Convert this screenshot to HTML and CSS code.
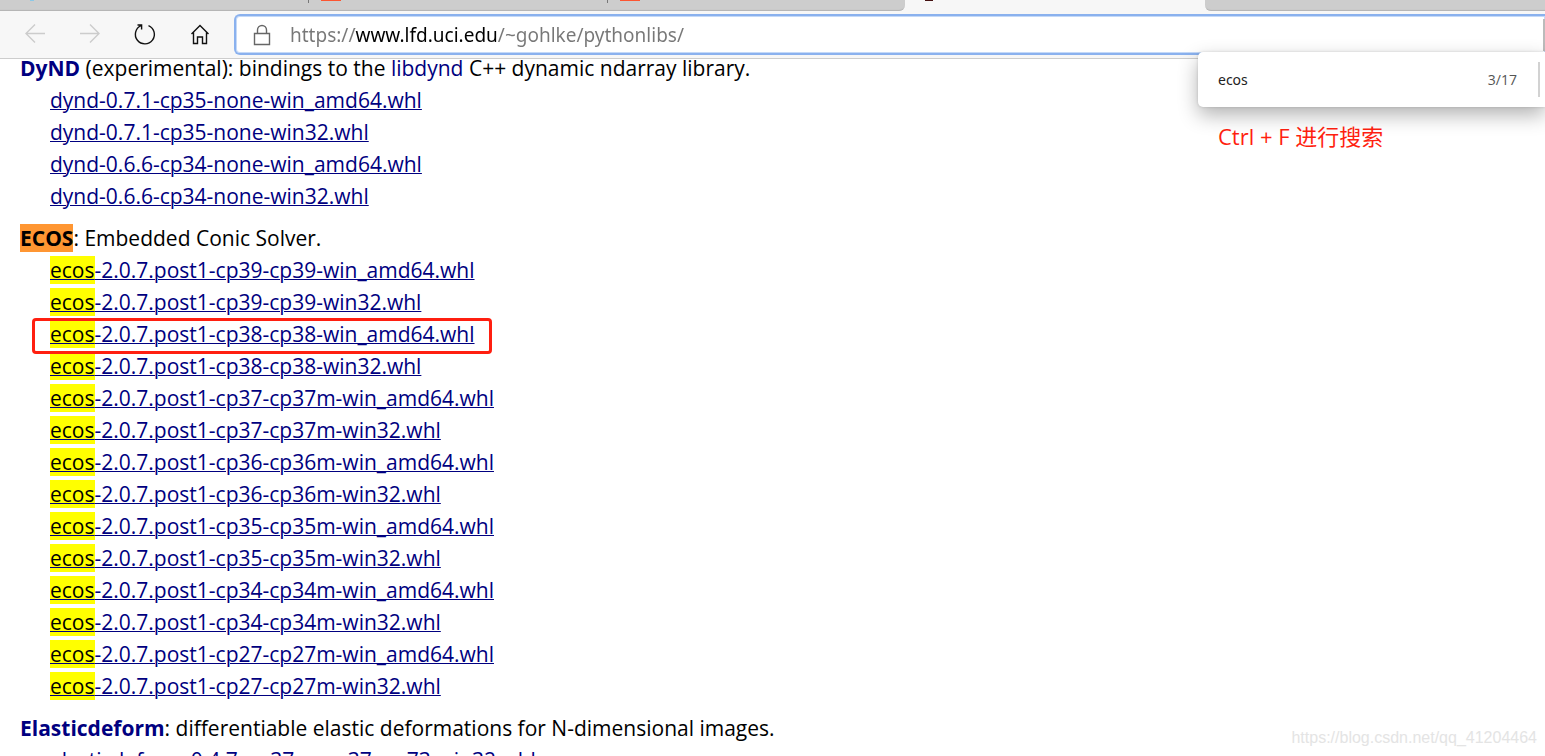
FILE: index.html
```html
<!DOCTYPE html>
<html lang="en">
<head>
<meta charset="utf-8">
<title>Python Extension Packages</title>
<link rel="stylesheet" href="styles.css">
</head>
<body>
<header class="browser">
  <div class="tabs">
    <div class="tab-group tab-group-left">
      <span class="tab tab-first"><i class="favicon favicon-blue"></i></span>
      <span class="tab"><i class="favicon favicon-orange"></i></span>
      <span class="tab"><i class="favicon favicon-orange"></i></span>
    </div>
    <div class="tab-active"><i class="favicon favicon-dark"></i></div>
    <div class="tab-group tab-group-right"></div>
  </div>
  <div class="toolbar">
    <nav class="nav" aria-label="Browser">
      <button class="nav-button" type="button" aria-label="Back" disabled>
        <svg class="icon" viewBox="0 0 22 22"><path d="M20 9.500H1M10 .5L1 9.500L10 18.500"/></svg>
      </button>
      <button class="nav-button" type="button" aria-label="Forward" disabled>
        <svg class="icon" viewBox="0 0 22 22"><path d="M0 9.500H19M10 .5L19 9.500L10 18.500"/></svg>
      </button>
      <button class="nav-button" type="button" aria-label="Refresh">
        <svg class="icon" viewBox="0 0 22 22"><path d="M13.500 1.600A9.500 9.500 0 1 1 6 1.700M2.500 1H6.600V5.400"/></svg>
      </button>
      <button class="nav-button" type="button" aria-label="Home">
        <svg class="icon" viewBox="0 0 22 22"><path d="M1.500 10L10 1.500L18.500 10M3.500 8.500V19.500H7.500V13H12.500V19.500H16.500V8.500"/></svg>
      </button>
    </nav>
    <div class="address">
      <svg class="lock" viewBox="0 0 18 22"><path d="M1.500 9.500H16.500V20.500H1.500ZM4.500 9.500V6A4.500 4.500 0 0 1 13.500 6V9.500"/></svg>
      <input class="address-input" type="text" aria-label="Address" value="https://www.lfd.uci.edu/~gohlke/pythonlibs/">
      <i class="address-edge"></i>
    </div>
  </div>
  <div class="find">
    <input class="find-input" type="text" aria-label="Find on page" value="ecos">
    <span class="find-count">3/17</span>
    <i class="find-divider"></i>
  </div>
</header>
<main class="page">
  <ul class="packages">
    <li class="package"><a class="name" href="#dynd">DyND</a> (experimental): bindings to the <a class="plain" href="#libdynd">libdynd</a> C++ dynamic ndarray library.
      <ul class="files">
        <li><a href="#">dynd-0.7.1-cp35-none-win_amd64.whl</a></li>
        <li><a href="#">dynd-0.7.1-cp35-none-win32.whl</a></li>
        <li><a href="#">dynd-0.6.6-cp34-none-win_amd64.whl</a></li>
        <li><a href="#">dynd-0.6.6-cp34-none-win32.whl</a></li>
      </ul>
    </li>
    <li class="package"><a class="name" href="#ecos"><mark class="current">ECOS</mark></a>: Embedded Conic Solver.
      <ul class="files">
        <li><a href="#"><mark>ecos</mark>-2.0.7.post1-cp39-cp39-win_amd64.whl</a></li>
        <li><a href="#"><mark>ecos</mark>-2.0.7.post1-cp39-cp39-win32.whl</a></li>
        <li><a class="boxed" href="#"><mark>ecos</mark>-2.0.7.post1-cp38-cp38-win_amd64.whl</a></li>
        <li><a href="#"><mark>ecos</mark>-2.0.7.post1-cp38-cp38-win32.whl</a></li>
        <li><a href="#"><mark>ecos</mark>-2.0.7.post1-cp37-cp37m-win_amd64.whl</a></li>
        <li><a href="#"><mark>ecos</mark>-2.0.7.post1-cp37-cp37m-win32.whl</a></li>
        <li><a href="#"><mark>ecos</mark>-2.0.7.post1-cp36-cp36m-win_amd64.whl</a></li>
        <li><a href="#"><mark>ecos</mark>-2.0.7.post1-cp36-cp36m-win32.whl</a></li>
        <li><a href="#"><mark>ecos</mark>-2.0.7.post1-cp35-cp35m-win_amd64.whl</a></li>
        <li><a href="#"><mark>ecos</mark>-2.0.7.post1-cp35-cp35m-win32.whl</a></li>
        <li><a href="#"><mark>ecos</mark>-2.0.7.post1-cp34-cp34m-win_amd64.whl</a></li>
        <li><a href="#"><mark>ecos</mark>-2.0.7.post1-cp34-cp34m-win32.whl</a></li>
        <li><a href="#"><mark>ecos</mark>-2.0.7.post1-cp27-cp27m-win_amd64.whl</a></li>
        <li><a href="#"><mark>ecos</mark>-2.0.7.post1-cp27-cp27m-win32.whl</a></li>
      </ul>
    </li>
    <li class="package"><a class="name" href="#elasticdeform">Elasticdeform</a>: differentiable elastic deformations for N-dimensional images.
      <ul class="files">
        <li><a href="#">elasticdeform-0.4.7-pp37-pypy37_pp73-win32.whl</a></li>
      </ul>
    </li>
  </ul>
  <p class="note">Ctrl + F 进行搜索</p>
  <p class="watermark">https://blog.csdn.net/qq_41204464</p>
</main>
</body>
</html>
```
FILE: styles.css
```css
* {
  box-sizing: border-box;
}

body {
  margin: 0;
  height: 100vh;
  display: flex;
  flex-direction: column;
  overflow: hidden;
  background: #fff;
  color: #000;
  font-family: "Open Sans", "Noto Sans CJK SC", sans-serif;
  font-size: 21px;
  line-height: 32px;
}

ul {
  list-style: none;
  margin: 0;
  padding: 0;
}

.browser {
  position: relative;
  z-index: 1;
  flex: none;
  background: #f7f7f7;
  border-bottom: 1px solid #cdcdcd;
}

/* Tab strip */
.tabs {
  display: grid;
  grid-template-columns: 905fr 300fr 340fr;
  height: 11px;
}

.tab-group {
  display: grid;
  background: #cdcdcd;
  box-shadow: inset 0 -2px 1px -1px #b4b4b4;
}

.tab-group-left {
  grid-template-columns: 308fr 299fr 298fr;
  border-bottom-right-radius: 6px;
}

.tab-group-right {
  border-bottom-left-radius: 6px;
}

.tab {
  display: flex;
  gap: 12px;
}

.tab::before {
  content: "";
  width: 1px;
  height: 3px;
  background: #777;
}

.tab-first {
  padding-left: 30px;
}

.tab-first::before {
  display: none;
}

.tab-active {
  padding-left: 20px;
}

.favicon {
  display: block;
  height: 1px;
}

.favicon-blue {
  width: 4px;
  background: #8cc8e6;
}

.favicon-orange {
  width: 20px;
  background: #fc5531;
}

.favicon-dark {
  width: 8px;
  background: #411;
}

/* Toolbar */
.toolbar {
  display: flex;
  align-items: center;
  height: 47px;
  padding-left: 8px;
}

.nav {
  display: flex;
  width: 220px;
  margin-right: 6px;
}

.nav-button {
  flex: 1;
  display: flex;
  justify-content: center;
  padding: 0;
  border: 0;
  background: none;
  color: #111;
}

.nav-button:disabled {
  color: #ccc;
}

.icon,
.lock {
  fill: none;
  stroke: currentColor;
  stroke-width: 1.4;
}

.icon {
  width: 22px;
  height: 22px;
  overflow: visible;
}

.address {
  flex: 1;
  display: flex;
  align-items: center;
  height: 41px;
  padding-left: 17px;
  border: 2px solid #8ab1ee;
  border-right: 0;
  border-radius: 6px 0 0 6px;
  box-shadow: inset 0 0 0 1px #c4d9f8;
  background: #fff;
}

.lock {
  flex: none;
  width: 18px;
  height: 22px;
  margin-right: 19px;
  color: #666;
}

.address-input {
  flex: 1;
  min-width: 0;
  height: 35px;
  padding: 0;
  border: 0;
  background: linear-gradient(to right, #777 65px, #000 65px, #000 207px, #777 207px);
  background-clip: text;
  -webkit-text-fill-color: transparent;
  color: #777;
  font: 19px "Noto Sans", sans-serif;
}

.address-edge {
  width: 2px;
  height: 32px;
  background: #bbb;
}

/* Find bar */
.find {
  position: absolute;
  top: 52px;
  right: 0;
  width: 347px;
  height: 55px;
  display: flex;
  align-items: center;
  padding: 0 5px 0 20px;
  border-radius: 5px 0 0 5px;
  background: #fff;
  box-shadow: 0 8px 20px rgba(0, 0, 0, 0.3), 0 0 3px rgba(0, 0, 0, 0.15);
}

.find-input {
  flex: 1;
  min-width: 0;
  padding: 0;
  border: 0;
  background: none;
  color: #222;
  font: 14px "Noto Sans", sans-serif;
}

.find-count {
  color: #555;
  font-size: 14px;
}

.find-divider {
  width: 2px;
  height: 35px;
  margin-left: 21px;
  background: #d2d2d2;
}

/* Page content */
.page {
  position: relative;
  flex: 1;
  min-height: 0;
  overflow: hidden;
}

.packages {
  margin-top: -7px;
  padding-left: 20px;
}

.package {
  margin-bottom: 10px;
}

.files {
  padding-left: 30px;
}

a {
  color: #000080;
  text-decoration-thickness: 1px;
  text-underline-offset: 1px;
  text-decoration-skip-ink: auto;
}

.name,
.plain {
  text-decoration: none;
}

.name {
  font-weight: 700;
}

mark {
  background: #ff0;
  color: #000;
}

.current {
  background: #ff9632;
}

.boxed {
  position: relative;
}

.boxed::after {
  content: "";
  position: absolute;
  inset: -2px -17px -6px -18px;
  border: 3px solid #ff1f10;
  border-radius: 4px;
}

.note {
  position: absolute;
  top: 61px;
  left: 1218px;
  margin: 0;
  color: #ff1f10;
  font-size: 22px;
}

.watermark {
  position: absolute;
  right: 8px;
  bottom: 2px;
  margin: 0;
  color: #e4e4e4;
  font: 16px/32px "Liberation Sans", sans-serif;
}
```
